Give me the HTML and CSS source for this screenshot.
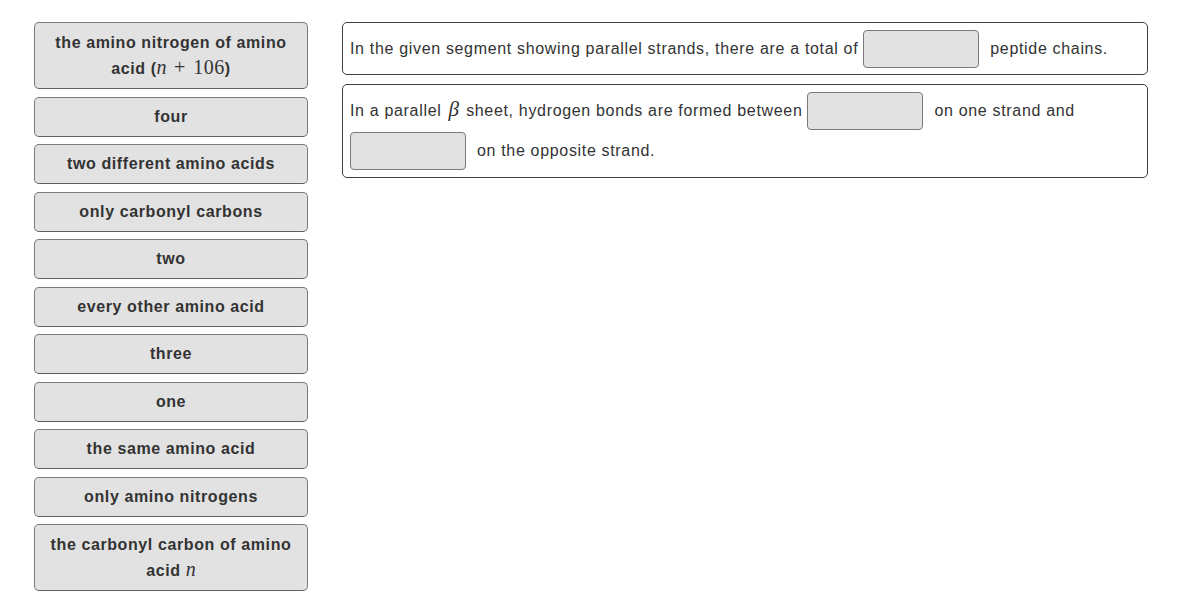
FILE: index.html
```html
<!DOCTYPE html>
<html>
<head>
<meta charset="utf-8">
<link rel="stylesheet" href="styles.css">
</head>
<body>
<div class="page">
  <div class="bank">
    <div class="card tall">the amino nitrogen of amino acid (<span class="mi">n</span><span class="mo"> + </span><span class="mn">106</span>)</div>
    <div class="card">four</div>
    <div class="card">two different amino acids</div>
    <div class="card">only carbonyl carbons</div>
    <div class="card">two</div>
    <div class="card">every other amino acid</div>
    <div class="card">three</div>
    <div class="card">one</div>
    <div class="card">the same amino acid</div>
    <div class="card">only amino nitrogens</div>
    <div class="card tall">the carbonyl carbon of amino acid <span class="mi">n</span></div>
  </div>
  <div class="questions">
    <div class="question">
      <span class="txt">In the given segment showing parallel strands, there are a total of</span>
      <span class="drop first"></span>
      <span class="txt">peptide chains.</span>
    </div>
    <div class="question">
      <span class="txt">In a parallel <span class="mi beta">β</span> sheet, hydrogen bonds are formed between</span>
      <span class="drop first"></span>
      <span class="txt">on one strand and</span>
      <span class="drop"></span>
      <span class="txt">on the opposite strand.</span>
    </div>
  </div>
</div>
</body>
</html>
```

FILE: styles.css
```css
* { box-sizing: border-box; }
body {
  margin: 0;
  background: #ffffff;
  font-family: "Liberation Sans", Arial, sans-serif;
  color: #333333;
}
.page {
  display: flex;
  align-items: flex-start;
  padding: 22px 0 0 34px;
  gap: 34px;
}
.bank {
  width: 274px;
  display: flex;
  flex-direction: column;
  gap: 7.5px;
}
.card {
  background: #e2e2e2;
  border: 1px solid #7a7a7a;
  border-bottom-color: #5f5f5f;
  border-radius: 5px;
  padding: 6px 8px;
  font-size: 16px;
  letter-spacing: 0.6px;
  font-weight: bold;
  line-height: 26px;
  text-align: center;
  min-height: 40px;
}
.card.tall { padding-top: 7px; padding-bottom: 6px; }
.mi {
  font-family: "Liberation Serif", "Times New Roman", serif;
  font-style: italic;
  font-weight: normal;
  font-size: 20px;
  letter-spacing: 0;
  line-height: 1;
}
.mo, .mn {
  font-family: "Liberation Serif", "Times New Roman", serif;
  font-weight: normal;
  font-size: 20px;
  letter-spacing: 0.5px;
  line-height: 1;
}
.mo { white-space: pre; word-spacing: 2px; }
.questions {
  width: 806px;
  display: flex;
  flex-direction: column;
  gap: 9px;
}
.question {
  border: 1px solid #3a4247;
  border-radius: 5px;
  padding: 7px 7px 6px 7px;
  display: flex;
  flex-wrap: wrap;
  align-items: center;
  row-gap: 2px;
  font-size: 16px;
  letter-spacing: 0.67px;
}
.question + .question { padding-bottom: 7px; }
.txt {
  display: inline-block;
  height: 38px;
  line-height: 38px;
  white-space: nowrap;
}
.beta { font-size: 21px; margin: 0 2px; }
.drop {
  width: 116px;
  height: 38px;
  background: #e2e2e2;
  border: 1px solid #7a7a7a;
  border-radius: 4px;
  margin-right: 11px;
}
.drop.first { margin-left: 5px; }
```
